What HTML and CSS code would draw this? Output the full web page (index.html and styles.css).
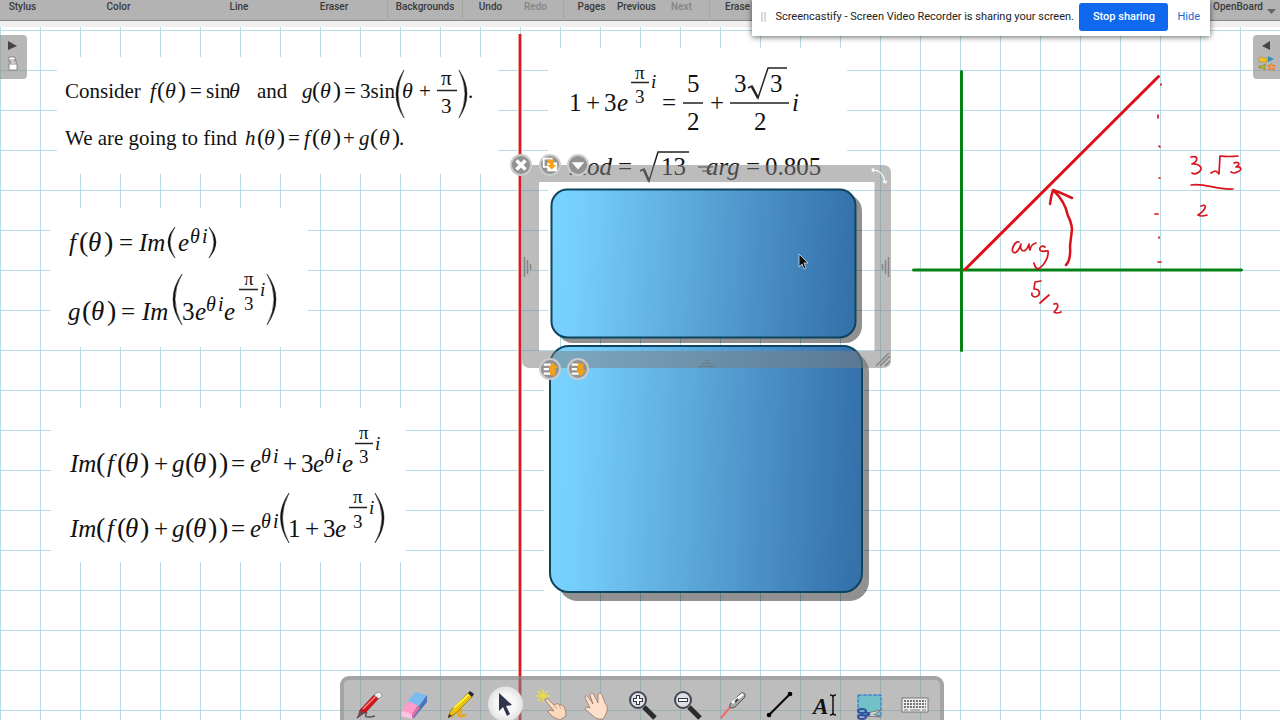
FILE: index.html
```html
<!DOCTYPE html>
<html lang="en">
<head>
<meta charset="utf-8">
<title>OpenBoard</title>
<link rel="stylesheet" href="styles.css">
</head>
<body>
<header class="menubar">
  <div class="group">
    <button class="item stylus">Stylus</button><button class="item color">Color</button><button class="item line">Line</button><button class="item eraser">Eraser</button>
  </div>
  <div class="group"><button class="item backgrounds">Backgrounds</button></div>
  <div class="group padded"><button class="item">Undo</button><button class="item" disabled>Redo</button></div>
  <div class="group padded"><button class="item">Pages</button><button class="item">Previous</button><button class="item" disabled>Next</button></div>
  <div class="group padded last"><button class="item">Erase</button></div>
  <button class="item app">OpenBoard <svg width="9" height="5"><path d="M0 0h9l-4.500 5z" fill="#666"/></svg></button>
</header>

<div class="share" role="status">
  <svg class="grip" width="5" height="10"><path d="M1 0v10M4 0v10" stroke="#b5b5b5"/></svg>
  <span class="share-text">Screencastify - Screen Video Recorder is sharing your screen.</span>
  <button class="stop">Stop sharing</button>
  <a class="hide" href="#">Hide</a>
</div>

<main class="board">
  <svg class="canvas" aria-label="Whiteboard">
    <defs>
      <linearGradient id="blue" x1="0" y1="0" x2="1" y2="0.030">
        <stop offset="0" stop-color="#7ad2ff"/><stop offset="0.100" stop-color="#76cefb"/><stop offset="0.950" stop-color="#3876b0"/><stop offset="1" stop-color="#3572aa"/>
      </linearGradient>
    </defs>
    <g transform="translate(0 -27)">
      <g fill="#fff">
        <rect x="57" y="57" width="441" height="117"/>
        <rect x="50" y="208" width="258" height="139"/>
        <rect x="51" y="408" width="355" height="154"/>
        <rect x="548" y="48" width="299" height="286"/>
        <rect x="544" y="354" width="320" height="238"/>
      </g>

      <!-- Question -->
      <g class="math small">
        <text class="up" x="65" y="98">Consider</text>
        <text y="98" x="150 157 165 178 190">f<tspan class="par">(</tspan><tspan class="th">θ</tspan><tspan class="par">)</tspan><tspan class="up">=</tspan></text>
        <text class="up" x="206" y="98">sin</text><text class="th" x="229" y="98">θ</text>
        <text class="up" x="257" y="98">and</text>
        <text y="98" x="302 312 320 333 344">g<tspan class="par">(</tspan><tspan class="th">θ</tspan><tspan class="par">)</tspan><tspan class="up">=</tspan></text>
        <text class="up" x="360" y="98">3sin</text>
        <text y="98" x="402 419"><tspan class="th">θ</tspan><tspan class="up">+</tspan></text>
        <text class="up" x="441" y="85">π</text><text class="up" x="441" y="113">3</text>
        <text class="up" x="468" y="98">.</text>
        <text class="up" x="65" y="145">We are going to find</text>
        <text y="145" x="245 257 264 277 288 304 312 320 333 343 359 370 379 392 399">h<tspan class="par">(</tspan><tspan class="th">θ</tspan><tspan class="par">)</tspan><tspan class="up">=</tspan>f<tspan class="par">(</tspan><tspan class="th">θ</tspan><tspan class="par">)</tspan><tspan class="up">+</tspan>g<tspan class="par">(</tspan><tspan class="th">θ</tspan><tspan class="par">)</tspan><tspan class="up">.</tspan></text>
      </g>

      <!-- f and g as imaginary parts -->
      <g class="math">
        <text y="251" x="69 79 88 104 119">f<tspan class="par">(</tspan><tspan class="th">θ</tspan><tspan class="par">)</tspan><tspan class="up">=</tspan></text>
        <text x="139" y="251">Im</text><text x="178" y="251">e</text>
        <text class="sup" y="243" x="190 202">θi</text>
        <text y="320" x="68 82 91 107 121">g<tspan class="par">(</tspan><tspan class="th">θ</tspan><tspan class="par">)</tspan><tspan class="up">=</tspan></text>
        <text x="142" y="320">Im</text>
        <text y="320" x="182 195"><tspan class="up">3</tspan>e</text>
        <text class="sup" y="311" x="206 218">θi</text><text x="224" y="320">e</text>
        <text class="pow up" x="244" y="285">π</text><text class="pow up" x="244" y="310">3</text><text class="pow" x="260" y="296">i</text>
      </g>

      <!-- Sum of f and g -->
      <g class="math">
        <text x="70" y="472">Im</text>
        <text y="472" x="96 107 117 125 140 154 172 185 193 208 219 231"><tspan class="par">(</tspan>f<tspan class="par">(</tspan><tspan class="th">θ</tspan><tspan class="par">)</tspan><tspan class="up">+</tspan>g<tspan class="par">(</tspan><tspan class="th">θ</tspan><tspan class="par">))</tspan><tspan class="up">=</tspan></text>
        <text x="250" y="472">e</text><text class="sup" y="463" x="261 273">θi</text>
        <text y="472" x="283 301 313"><tspan class="up">+3</tspan>e</text><text class="sup" y="463" x="324 336">θi</text>
        <text x="342" y="472">e</text>
        <text class="pow up" x="359" y="439">π</text><text class="pow up" x="359" y="463">3</text><text class="pow" x="375" y="450">i</text>
        <text x="70" y="537">Im</text>
        <text y="537" x="96 107 117 125 140 154 172 185 193 208 219 231"><tspan class="par">(</tspan>f<tspan class="par">(</tspan><tspan class="th">θ</tspan><tspan class="par">)</tspan><tspan class="up">+</tspan>g<tspan class="par">(</tspan><tspan class="th">θ</tspan><tspan class="par">))</tspan><tspan class="up">=</tspan></text>
        <text x="250" y="537">e</text><text class="sup" y="528" x="261 273">θi</text>
        <text y="537" x="288 305 323 335"><tspan class="up">1+3</tspan>e</text>
        <text class="pow up" x="353" y="503">π</text><text class="pow up" x="353" y="528">3</text><text class="pow" x="369" y="514">i</text>
      </g>

      <!-- Modulus and argument -->
      <g class="math">
        <text y="111" x="569 586 604 617 662"><tspan class="up">1+3</tspan>e<tspan class="up">=</tspan></text>
        <text class="pow up" x="635" y="79">π</text><text class="pow up" x="635" y="103">3</text><text class="pow" x="651" y="88">i</text>
        <text class="up" x="687" y="92">5</text><text class="up" x="687" y="130">2</text>
        <text class="up" x="710" y="111">+</text>
        <text class="up" x="734" y="92">3</text><text class="up" x="770" y="92">3</text><text class="up" x="754" y="130">2</text>
        <text x="792" y="111">i</text>
        <text x="569" y="175">mod</text><text class="up" x="618" y="175">=</text><text class="up" x="661" y="175">13</text>
        <text x="706" y="175">arg</text><text class="up" x="746" y="175">=</text><text class="up" x="765" y="175">0.805</text>
      </g>

      <g fill="none" stroke="#222" stroke-width="1.500">
        <path d="M437 90.500h20M239 289.500h19M355 443.500h18M349 507.500h18M631 82.500h18M683 103h20M730 103h59"/>
        <path d="M748 88l4-2 6 12 10-30h19M640 171l4-2 5 12 9-29h31"/>
        <path stroke-width="2.500" d="M752 87l6 11M644 170l5 11"/>
        <path stroke-width="1" d="M698 167h15M702 171h9"/>
      </g>
      <g fill="#111" stroke="#111" stroke-width="0.500">
        <path d="M404 70q-16 24 0 48q-12-24 0-48M459 70q16 24 0 48q12-24 0-48"/>
        <path d="M175 227q-14 15 0 31q-10-16 0-31M209 227q14 15 0 31q10-16 0-31"/>
        <path d="M182 274q-18 25 0 51q-14-26 0-51M267 274q18 25 0 51q14-26 0-51"/>
        <path d="M289 493q-17 24 0 50q-13-25 0-50M375 493q18 25 0 50q14-25 0-50"/>
      </g>

      <!-- Cover shapes -->
      <rect x="558" y="352" width="311" height="249" rx="20" fill="#000" fill-opacity="0.430"/>
      <rect x="550" y="346" width="312" height="246" rx="19" fill="url(#blue)" stroke="#0d4560" stroke-width="2"/>
      <rect x="556" y="194" width="306" height="149" rx="17" fill="#000" fill-opacity="0.430"/>
      <rect x="551.500" y="189.500" width="304" height="148" rx="16" fill="url(#blue)" stroke="#0d4560" stroke-width="2"/>

      <!-- Argand diagram -->
      <g fill="none" stroke-linecap="round" stroke-linejoin="round">
        <path d="M961.500 71.500v279M913.500 270h328" stroke="#048014" stroke-width="3"/>
        <path d="M965 269.500L1158.500 76.500" stroke="#df101a" stroke-width="3"/>
        <g stroke="#d9131b" stroke-width="1.700">
          <path stroke-width="2.500" d="M1066 265q5-5 4-19l2-17q-1-8-4-13q-3-15-15-26M1050 204q1-8 3-14q4 1 19 8"/>
          <path d="M1019 242c-4-1-8 7-6 10c3 3 7-4 8-8c-1 4 0 7 3 7c3-1 4-4 5-7c0 3 0 5 1 6c1-5 3-6 6-7M1045 247c-3-2-6 0-5 3c2 3 6 0 8 1c1 6-4 15-10 18q-3-1-4-6"/>
          <path d="M1041 281l-6 1-1 7c7 0 7 7 1 8q-4-1-3-4M1049 295l-9 8M1054 304c5-2 5 3 0 8q3 2 7 0"/>
          <path d="M1191 157c8-2 7 4 1 7c7-1 12 4 7 8q-4 3-7 1M1211 173q3-2 5-2l3 3 1-18q9 1 18 0M1234 163c6-2 6 2 2 4c5-1 7 3 1 5q-3 2-6 0M1191 185c15-2 24 5 42 4M1201 206c7-3 5 4-3 9q3 2 9 0"/>
          <path d="M1161 84v1M1158 115v3M1159 146l1 1M1159 178h1M1155 214h3M1159 237v1M1158 262h3"/>
        </g>
      </g>

      <!-- Divider -->
      <path d="M520 34v700" stroke="#f39a9c" stroke-width="4"/>
      <path d="M520 34v700" stroke="#d41f28" stroke-width="2"/>

      <!-- Selection frame -->
      <path fill-rule="evenodd" fill="#7f7f7f" fill-opacity="0.520" d="M530 165h353q8 0 8 8v187q0 8-8 8h-353q-8 0-8-8v-187q0-8 8-8zM539 182v169h335.500v-169z"/>
      <g fill="none" stroke="#858585" stroke-width="1.500">
        <path d="M524.500 257v20M527.500 260v14M530.500 264v6M888.500 257v20M885.500 260v14M882.500 264v6"/>
        <path d="M876 366l13-13M880 366l10-10M885 366l5-5"/>
        <path stroke="#687f8c" d="M698 366.500h18M701 363.500h12M705 360.500h4"/>
        <path stroke="#fff" stroke-width="1.200" d="M872 170c8 0 12 4 13 13M874 168l-2 2 2 2M883 181l2 2 2-2"/>
      </g>
      <path d="M799 254v13l3-3 2 5 2-1-2-5h4z" fill="#111" stroke="#ddd" stroke-width="0.800"/>
    </g>
  </svg>

  <button class="knob close" aria-label="Close"><svg viewBox="0 0 20 20"><path d="M5 5l10 10M15 5L5 15" stroke="#fff" stroke-width="4"/></svg></button>
  <button class="knob copy" aria-label="Duplicate"><svg viewBox="0 0 20 20"><path d="M3 3h9v9H3z" fill="none" stroke="#fff" stroke-width="2"/><path d="M7 7h11v10H7z" fill="#fff"/><path d="M7 4h7v6h3l-5 5-5-5h3V8H7z" fill="#f5a313"/></svg></button>
  <button class="knob menu" aria-label="Object menu"><svg viewBox="0 0 20 20"><path d="M3 7h14l-7 8z" fill="#fff"/></svg></button>
  <button class="knob raise" aria-label="Bring forward"><svg viewBox="0 0 20 20"><path d="M3 5h8M3 10h6M3 15h8" stroke="#fff" stroke-width="2.500"/><path d="M13 3l6 6h-3v8h-6V9H8z" fill="#f0a21c"/></svg></button>
  <button class="knob lower" aria-label="Send backward"><svg viewBox="0 0 20 20"><path d="M3 5h8M3 10h6M3 15h8" stroke="#fff" stroke-width="2.500"/><path d="M13 18l6-6h-3V4h-6v8H8z" fill="#f0a21c"/></svg></button>

  <button class="tab left" aria-label="Page list">
    <svg width="27" height="44"><path d="M8 6l9 5-9 4z" fill="#444"/><g fill="#fff" stroke="#777" stroke-width="0.800"><path d="M9 22h6v5H9zM10 25h6v5h-6z"/><path d="M9 29h8v6H9z"/></g></svg>
  </button>
  <button class="tab right" aria-label="Library">
    <svg width="27" height="44"><path d="M17 6l-8 5 8 4z" fill="#444"/><path d="M6 22h3l1 1h4v4H6z" fill="#f2c12e" stroke="#a98316" stroke-width="0.500"/><path d="M15 21l6 3-6 3z" fill="#2e91bd"/><path d="M6 31h3l3-2v6l-3-2H6z" fill="#b5b52d" stroke="#77751e" stroke-width="0.500"/><path d="M18.500 28.500l1 2h2.500l-1.500 2 1 2.500-3-1-3 1 1-2.500-1.500-2h2.500z" fill="#f2a06a" stroke="#e47b2b"/></svg>
  </button>

  <nav class="tools" aria-label="Tools">
    <button aria-label="Pen"><svg viewBox="0 0 32 32"><path d="M4 29c8-8 11-7 9-4s2 4 9 2" fill="none" stroke="#555" stroke-width="1.500"/><path d="M5 28l2-7L21 6l5 3-13 14z" fill="#d4151b" stroke="#712" stroke-width="0.600"/><path d="M10 20L23 7" stroke="#ff8580" stroke-width="1.500"/><path d="M21 6l4-3q4 0 4 4l-3 3z" fill="#eee" stroke="#666" stroke-width="0.600"/><path d="M5 28l2-6 5 2z" fill="#555"/></svg></button>
    <button aria-label="Eraser"><svg viewBox="0 0 32 32"><path d="M4 22L10 12l10 3-6 12-10-2z" fill="#ff9ccd"/><path d="M10 12l7-9 12 3-8 11z" fill="#7dbbef"/><path d="M14 28l7-11 8-11v7L16 29z" fill="#4774bf"/><path d="M4 22l10 3v5L3 27z" fill="#ffc4e4"/><path d="M14 25l6-9 2 3-8 11z" fill="#d970a0"/></svg></button>
    <button aria-label="Highlighter"><svg viewBox="0 0 32 32"><path d="M7 28c8-9 12-9 9-5s-1 5 6 3" fill="none" stroke="#e7a822" stroke-width="3"/><path d="M4 29l3-8L24 4l4 4-15 15z" fill="#e9c40a" stroke="#77630b" stroke-width="0.600"/><path d="M10 19L25 5" stroke="#fff03b" stroke-width="2"/><path d="M24 4l2-2 4 3-2 3z" fill="#282828"/><path d="M4 29l1-4 3 2z" fill="#333"/></svg></button>
    <button class="active" aria-label="Select" aria-pressed="true"><svg viewBox="0 0 32 32"><path d="M10 4l13 12-6 1 4 8-3 2-4-9-4 4z" fill="#2e354d"/></svg></button>
    <button aria-label="Interact"><svg viewBox="0 0 32 32"><path d="M8 0v13M1 7h14M3 2l10 10M13 2L3 12" stroke="#f1dc3c" stroke-width="1.300"/><path d="M10 10q2-1 4 1l5 5q4-3 6 0q3-1 4 2q2 2 2 9l-6 4q-8-2-12-8q0-3 6-1l-5-6-4-5z" fill="#fbd9bf" stroke="#8b6757" stroke-width="0.700"/><path d="M19 16l3 4M24 16l2 4" stroke="#b88b76" stroke-width="0.700"/></svg></button>
    <button aria-label="Scroll page"><svg viewBox="0 0 32 32"><path d="M5 8q1-3 4 1l4 6L10 6q1-4 4 0l4 8V5q2-3 4 1l3 8q4 4 1 11l-3 5q-7 1-11-4L5 20q0-3 5-1l-3-6z" fill="#fce0ca" stroke="#9b7564" stroke-width="0.800"/></svg></button>
    <button aria-label="Zoom in"><svg viewBox="0 0 32 32"><path d="M18 18l11 11" stroke="#2b2b2b" stroke-width="5"/><circle cx="12" cy="11" r="8" fill="#dedfe6" stroke="#444951" stroke-width="2"/><path d="M12 6v10M7 11h10" stroke="#343944" stroke-width="4"/><path d="M12 7v8M8 11h8" stroke="#fff" stroke-width="2"/></svg></button>
    <button aria-label="Zoom out"><svg viewBox="0 0 32 32"><path d="M18 18l11 11" stroke="#2b2b2b" stroke-width="5"/><circle cx="12" cy="11" r="8" fill="#dedfe6" stroke="#444951" stroke-width="2"/><path d="M7 11h10" stroke="#343944" stroke-width="4"/><path d="M8 11h8" stroke="#fff" stroke-width="2"/></svg></button>
    <button aria-label="Laser pointer"><svg viewBox="0 0 32 32"><path d="M4 29l10-12" stroke="#f26868" stroke-width="2"/><path d="M13 15L24 4q5-1 4 4L18 18q-6 3-5-3z" fill="#aaa" stroke="#555"/><path d="M15 14L26 5" stroke="#fff" stroke-width="2.500"/><path d="M18 13l3-3" stroke="#444" stroke-width="2"/></svg></button>
    <button aria-label="Line"><svg viewBox="0 0 32 32"><path d="M6 26L27 5" stroke="#000" stroke-width="2"/><circle cx="6" cy="26" r="2.300"/><circle cx="27" cy="5" r="2.300"/></svg></button>
    <button aria-label="Text"><svg viewBox="0 0 32 32"><text class="letter" x="5" y="25">A</text><path d="M22 6q3 0 3 2q0-2 3-2M22 26q3 0 3-2q0 2 3 2M25 8v16" fill="none" stroke="#111" stroke-width="1.500"/></svg></button>
    <button aria-label="Capture"><svg viewBox="0 0 32 32"><path d="M4 6h23v21H4z" fill="#73c1c8" stroke="#256bcf" stroke-dasharray="4 1"/><path d="M13 24l14-3-7 5M13 27l14 1-8-3" fill="#ddd" stroke="#777"/><g fill="none" stroke="#334fa1" stroke-width="2"><ellipse cx="8" cy="22" rx="4" ry="2"/><ellipse cx="8" cy="28" rx="4" ry="2"/><path d="M11 23l5 2M11 27l5-2"/></g></svg></button>
    <button aria-label="Virtual keyboard"><svg viewBox="0 0 32 32"><rect x="3" y="9" width="26" height="14" fill="#eee" stroke="#777"/><path d="M5 12h22M5 15h22M5 18h22" stroke="#777" stroke-width="2" stroke-dasharray="2 1"/><path d="M5 21h4M11 21h10M23 21h4" stroke="#777"/></svg></button>
  </nav>
</main>
</body>
</html>
```
FILE: styles.css
```css
* { box-sizing: border-box; }
body {
  margin: 0;
  height: 100vh;
  display: flex;
  flex-direction: column;
  overflow: hidden;
  position: relative;
  font-family: Roboto, "Liberation Sans", sans-serif;
  background: #fff;
}
button { border: 0; padding: 0; background: none; font: inherit; color: inherit; }

.menubar {
  flex: none;
  display: flex;
  height: 27px;
  padding-bottom: 6px;
  background: linear-gradient(#b3b3b3 20px, #868686 20px, #868686 21px, #f0f0f0 21px);
  font-size: 10px;
  font-weight: 500;
  color: #3a3a3a;
}
.group { display: flex; border-right: 1px dotted #999; }
.padded { padding: 0 5px; }
.last { border: 0; }
.item { width: 45px; height: 14px; line-height: 14px; text-align: center; white-space: nowrap; }
.item:disabled { color: #858585; }
.color { width: 147px; }
.line { width: 94px; }
.eraser { width: 101px; padding-right: 5px; }
.backgrounds { width: 74px; }
.app { width: auto; margin-left: auto; padding-right: 4px; display: flex; gap: 4px; }
.app svg { margin-top: 9px; }

.share {
  position: absolute;
  z-index: 2;
  top: 0;
  right: 70px;
  height: 36px;
  padding: 0 10px 3px 9px;
  display: flex;
  align-items: center;
  background: #fff;
  box-shadow: 0 1px 6px rgba(0, 0, 0, .6);
  color: #222;
  font-size: 11px;
}
.grip { margin-right: 9px; }
.share-text { width: 304px; white-space: nowrap; }
.stop {
  width: 89px;
  height: 28px;
  border-radius: 3px;
  background: #0f68ee;
  color: #fff;
  font-weight: 500;
}
.hide { margin-left: 9px; color: #1769d2; text-decoration: none; }

.board {
  flex: 1;
  position: relative;
  overflow: hidden;
  background-color: #fff;
  background-image:
    linear-gradient(90deg, #b6dce7 1px, transparent 1px),
    linear-gradient(#b6dce7 1px, transparent 1px);
  background-size: 40px 40px;
  background-position: 0 3px;
}
.canvas { display: block; width: 100%; height: 100%; overflow: visible; }
.math {
  font-family: "Liberation Serif", serif;
  font-style: italic;
  font-size: 25px;
  fill: #111;
}
.small { font-size: 21px; }
.sup { font-size: 20px; }
.pow { font-size: 19px; }
.up { font-style: normal; }
.par { font-style: normal; font-size: 28px; }
.th { font-size: 27px; }
.small .par { font-size: 24px; }
.small .th { font-size: 22px; }

.knob {
  position: absolute;
  width: 22px;
  height: 22px;
  border: 2px solid #ccc;
  border-radius: 50%;
  background: #929292;
}
.knob svg { display: block; width: 18px; height: 18px; }
.close { left: 510px; top: 127px; }
.copy { left: 539px; top: 127px; }
.menu { left: 567px; top: 127px; }
.raise { left: 539px; top: 331px; }
.lower { left: 567px; top: 331px; }

.tab {
  position: absolute;
  top: 8px;
  width: 27px;
  height: 44px;
  background: rgba(145, 145, 145, .65);
}
.tab svg { display: block; }
.left { left: 0; border-radius: 0 4px 4px 0; }
.right { right: 0; border-radius: 4px 0 0 4px; }

.tools {
  position: absolute;
  bottom: 0;
  left: 50%;
  transform: translateX(-50%);
  margin-left: 2px;
  width: 604px;
  height: 44px;
  padding: 0 2px;
  display: flex;
  border: 4px solid rgba(135, 135, 135, .45);
  border-bottom: 0;
  border-radius: 9px 9px 0 0;
  background: rgba(135, 135, 135, .55);
}
.tools button { flex: 1; height: 40px; padding-top: 9px; }
.tools svg { display: block; width: 32px; height: 32px; margin: 0 auto; }
.active { background: radial-gradient(circle at 50% 24px, #f7f7f7 10px, #e2e2e2 17px, transparent 18px); }
.letter { font: italic bold 23px "Liberation Serif", serif; fill: #111; }
```
